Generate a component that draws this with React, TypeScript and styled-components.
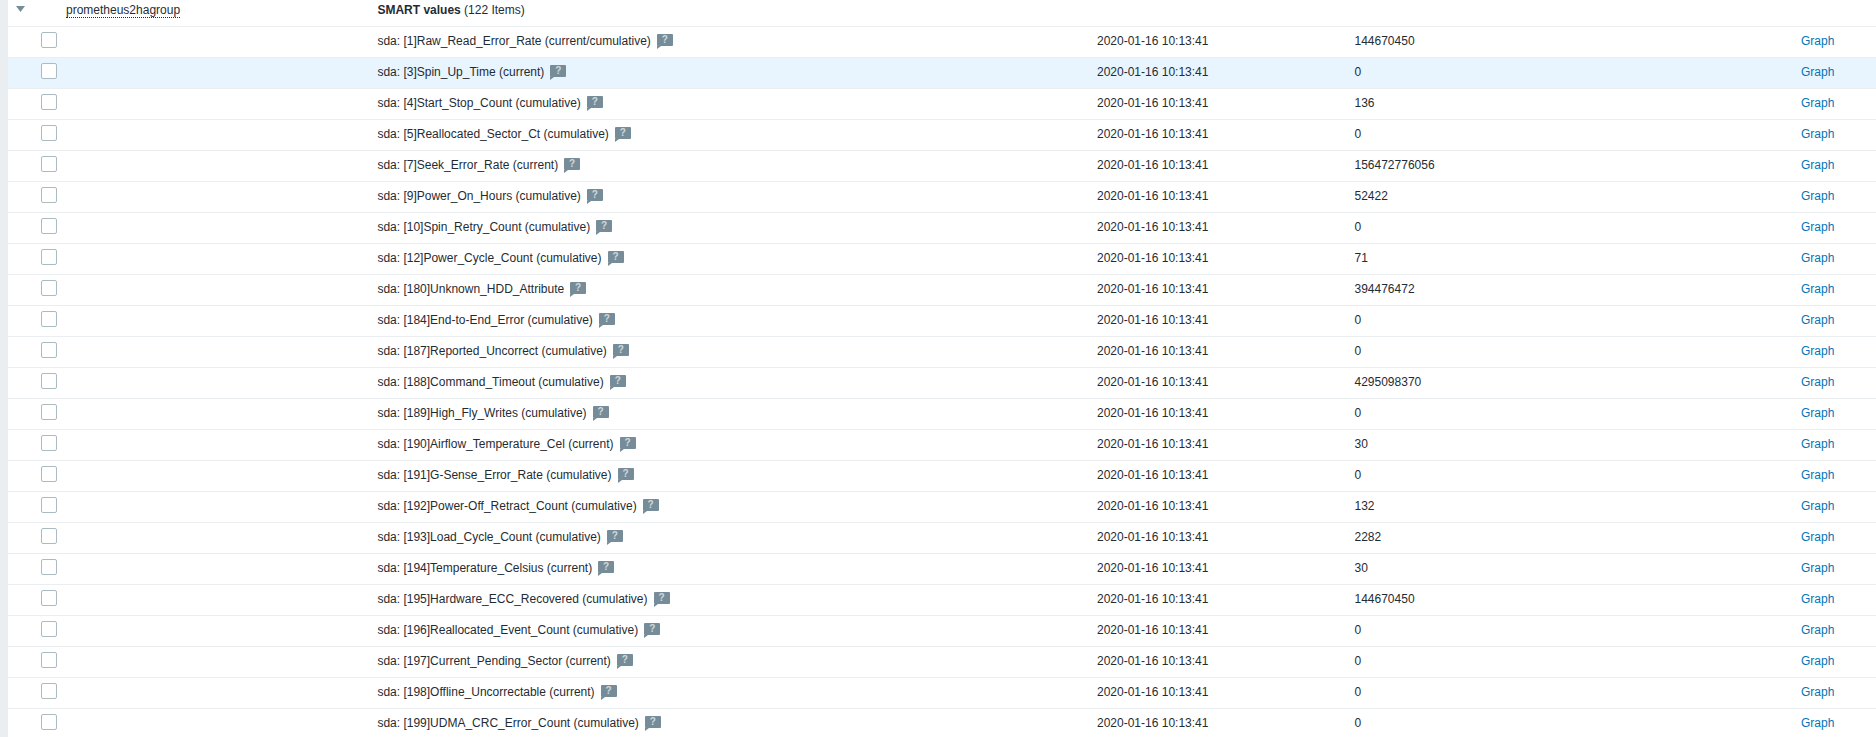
import React from "react";
import styled, { createGlobalStyle } from "styled-components";

const GlobalStyle = createGlobalStyle`
  html, body {
    margin: 0;
    height: 100%;
    overflow: hidden;
    background: #fff;
  }
  body {
    font-family: "Liberation Sans", Arial, sans-serif;
    font-size: 12px;
    color: #1f2c33;
  }
`;

const Page = styled.div`
  height: 737px;
  overflow: hidden;
  border-left: 8px solid #ebeef0;
`;

const Row = styled.div<{ $hover?: boolean }>`
  display: grid;
  grid-template-columns: 58px 311.4px 719.6px 257.5px 446.5px 1fr;
  height: 30px;
  line-height: 28px;
  border-bottom: 1px solid #ebeef0;
  background: ${(p) => (p.$hover ? "#e8f5ff" : "#fff")};
`;

const HeaderRow = styled(Row)`
  height: 26px;
  line-height: 20px;
`;

const ToggleCell = styled.div`
  padding: 6px 0 0 8px;
  line-height: 0;
`;

const CheckCell = styled.div`
  padding: 5px 0 0 33px;
  line-height: 0;
`;

const Checkbox = styled.span`
  display: inline-block;
  box-sizing: border-box;
  width: 16px;
  height: 16px;
  background: #fff;
  border: 1px solid #acbbc2;
  border-radius: 2px;
`;

const GroupName = styled.span`
  border-bottom: 1px dotted #1f2c33;
`;

const Bold = styled.b`
  font-weight: bold;
`;

const NameCell = styled.div`
  display: flex;
  align-items: center;
  height: 28px;
  white-space: nowrap;
`;

const HintIcon = styled.span`
  position: relative;
  display: inline-block;
  width: 16px;
  height: 12px;
  margin: -2px 0 0 6px;
  background: #768d99;
  border-radius: 1px;
  color: #d0d8dc;
  font-size: 10px;
  font-weight: bold;
  line-height: 12px;
  text-align: center;

  &::after {
    content: "";
    position: absolute;
    left: 0;
    top: 12px;
    border-top: 3px solid #768d99;
    border-right: 4px solid transparent;
  }
`;

const GraphLink = styled.a`
  color: #0275b8;
  text-decoration: none;
  cursor: pointer;
`;

const items: [string, string][] = [
  ["[1]Raw_Read_Error_Rate (current/cumulative)", "144670450"],
  ["[3]Spin_Up_Time (current)", "0"],
  ["[4]Start_Stop_Count (cumulative)", "136"],
  ["[5]Reallocated_Sector_Ct (cumulative)", "0"],
  ["[7]Seek_Error_Rate (current)", "156472776056"],
  ["[9]Power_On_Hours (cumulative)", "52422"],
  ["[10]Spin_Retry_Count (cumulative)", "0"],
  ["[12]Power_Cycle_Count (cumulative)", "71"],
  ["[180]Unknown_HDD_Attribute", "394476472"],
  ["[184]End-to-End_Error (cumulative)", "0"],
  ["[187]Reported_Uncorrect (cumulative)", "0"],
  ["[188]Command_Timeout (cumulative)", "4295098370"],
  ["[189]High_Fly_Writes (cumulative)", "0"],
  ["[190]Airflow_Temperature_Cel (current)", "30"],
  ["[191]G-Sense_Error_Rate (cumulative)", "0"],
  ["[192]Power-Off_Retract_Count (cumulative)", "132"],
  ["[193]Load_Cycle_Count (cumulative)", "2282"],
  ["[194]Temperature_Celsius (current)", "30"],
  ["[195]Hardware_ECC_Recovered (cumulative)", "144670450"],
  ["[196]Reallocated_Event_Count (cumulative)", "0"],
  ["[197]Current_Pending_Sector (current)", "0"],
  ["[198]Offline_Uncorrectable (current)", "0"],
  ["[199]UDMA_CRC_Error_Count (cumulative)", "0"],
];

function App() {
  return (
    <Page>
      <GlobalStyle />
      <HeaderRow>
        <ToggleCell>
          <svg width="9" height="6" viewBox="0 0 9 6">
            <path d="M0 0h9L4.5 6z" fill="#768d99" />
          </svg>
        </ToggleCell>
        <div>
          <GroupName>prometheus2hagroup</GroupName>
        </div>
        <div>
          <Bold>SMART values</Bold> (122 Items)
        </div>
        <div />
        <div />
        <div />
      </HeaderRow>
      {items.map(([name, value], i) => (
        <Row key={name} $hover={i === 1}>
          <CheckCell>
            <Checkbox />
          </CheckCell>
          <div />
          <NameCell>
            sda: {name}
            <HintIcon>?</HintIcon>
          </NameCell>
          <div>2020-01-16 10:13:41</div>
          <div>{value}</div>
          <div>
            <GraphLink>Graph</GraphLink>
          </div>
        </Row>
      ))}
    </Page>
  );
}

export default App;
